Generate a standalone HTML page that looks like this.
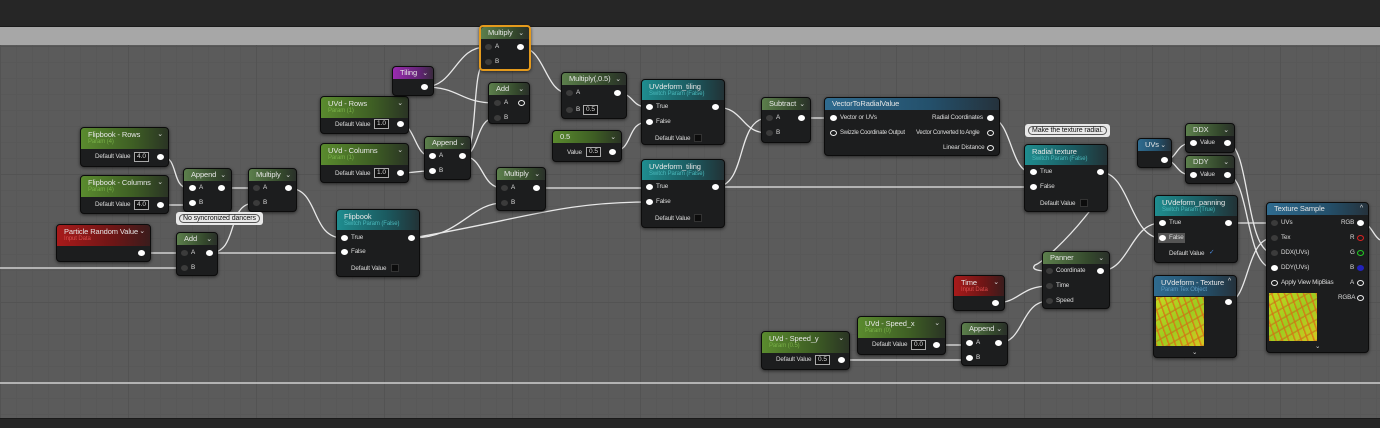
<!DOCTYPE html>
<html><head><meta charset="utf-8"><style>
*{margin:0;padding:0;box-sizing:border-box}
body{width:1380px;height:428px;overflow:hidden;position:relative;font-family:"Liberation Sans",sans-serif;background:#5b5b5b;
background-image:linear-gradient(#535353 1px,transparent 1px),linear-gradient(90deg,#535353 1px,transparent 1px),linear-gradient(#585858 1px,transparent 1px),linear-gradient(90deg,#585858 1px,transparent 1px);
background-size:128px 128px,128px 128px,16px 16px,16px 16px;background-position:0 46px}
.top{position:absolute;left:0;top:0;width:1380px;height:27px;background:#262626;border-bottom:1px solid #1a1a1a}
.band{position:absolute;left:0;top:27px;width:1380px;height:18px;background:#a7a7a7}
.bot{position:absolute;left:0;top:418px;width:1380px;height:10px;background:#262626;border-top:1px solid #1a1a1a}
svg{position:absolute;left:0;top:0}
.n{position:absolute;background:#1c1d1e;border:1px solid #0c0c0c;border-radius:4px;box-shadow:0 1px 3px rgba(0,0,0,.6)}
.h{position:absolute;left:0;top:0;right:0;border-radius:3px 3px 0 0;color:#e6e6e6;font-size:7.5px;padding:2px 0 0 7px;white-space:nowrap;letter-spacing:-0.1px}
.g{background:linear-gradient(90deg,#5a8b2e,#3e5e24 60%,#2a3424)}
.gs{background:linear-gradient(90deg,#5c7f4c,#34482c 70%,#2a302a)}
.c{background:linear-gradient(90deg,#1f8d8f,#1b5a60 60%,#223236)}
.b{background:linear-gradient(90deg,#2f6b8f,#24506b 60%,#25323c)}
.r{background:linear-gradient(90deg,#a81a1a,#6e1616 60%,#3a1c1c)}
.pu{background:linear-gradient(90deg,#9a2bb0,#5e2470 70%,#3a2a3e)}
.h i{display:block;font-style:normal;font-size:6px;color:#79b048;margin-top:0px}
.c i{color:#4ab8bb}.b i{color:#5d9ac0}.r i{color:#d84a4a}
.h s{position:absolute;right:5px;top:2px;text-decoration:none;font-size:7px;color:#ddd}
.t{position:absolute;font-size:6.3px;color:#ddd;white-space:nowrap;line-height:8px;letter-spacing:-0.15px}
.v{position:absolute;font-size:6.5px;color:#ddd;border:1px solid #aaa;padding:0 2px;line-height:8px;background:#111}
.p{position:absolute;width:7px;height:6px;border-radius:50%;background:#fff;margin:-3px 0 0 -3px}
.d{position:absolute;width:7px;height:6px;border-radius:50%;background:#3b3b3b;margin:-3px 0 0 -3px}
.o{position:absolute;width:7px;height:6px;border-radius:50%;border:1.5px solid #eee;margin:-3px 0 0 -3px}
.k{position:absolute;width:8px;height:8px;background:#0c0c0c;border:1px solid #333}
.cm{position:absolute;background:#e8e8e8;border-radius:3px;font-size:7px;color:#111;padding:1px 3px;white-space:nowrap;line-height:11px;letter-spacing:-0.1px}
.cm span{border:1px solid #555;border-radius:6px;padding:0 3px}
.tex{position:absolute;background:repeating-linear-gradient(70deg,rgba(220,110,20,.8) 0 1px,transparent 2px 6px),repeating-linear-gradient(-30deg,rgba(200,90,20,.5) 0 1px,transparent 2px 9px),linear-gradient(135deg,#c6d820,#9ccc20 50%,#d6c820)}
</style></head><body>
<div class="top"></div><div class="band"></div>
<svg width="1380" height="428" fill="none" stroke="#e8e8e8" stroke-width="1.3">
<path d="M0 383H1380"/>
<path d="M0 268H183"/>
<path d="M163 157C178 157 172 188 188 188"/>
<path d="M163 205H188"/>
<path d="M226 188H255"/>
<path d="M209 253C240 253 225 203 255 203"/>
<path d="M288 188C320 188 310 238 343 238"/>
<path d="M142 253H183"/>
<path d="M209 253H343"/>
<path d="M400 124C415 124 415 156 430 156"/>
<path d="M400 173C415 173 415 171 430 171"/>
<path d="M424 87C455 87 455 47 486 47"/>
<path d="M424 87C460 87 460 103 495 103"/>
<path d="M462 156C480 156 470 62 486 62"/>
<path d="M462 156C480 156 475 118 495 118"/>
<path d="M462 156C485 156 480 188 503 188"/>
<path d="M412 238C460 238 470 203 503 203"/>
<path d="M412 238C520 220 560 202 648 202"/>
<path d="M520 47C545 47 545 93 568 93"/>
<path d="M617 93C635 93 630 107 648 107"/>
<path d="M611 152C635 152 625 122 648 122"/>
<path d="M536 188H648"/>
<path d="M715 107C745 107 740 133 768 133"/>
<path d="M715 187C748 187 735 118 768 118"/>
<path d="M715 187H1031"/>
<path d="M801 118H831"/>
<path d="M990 118C1012 118 1010 172 1031 172"/>
<path d="M1100 172C1130 172 1130 238 1161 238"/>
<path d="M1100 172C1130 175 1050 260 1035 265C1030 270 1040 271 1049 271"/>
<path d="M1100 271C1130 271 1130 223 1161 223"/>
<path d="M995 303C1020 303 1020 286 1049 286"/>
<path d="M998 343C1025 343 1020 301 1049 301"/>
<path d="M936 345H968"/>
<path d="M840 360H968"/>
<path d="M1164 160C1178 160 1175 143 1192 143"/>
<path d="M1164 160C1178 160 1175 175 1192 175"/>
<path d="M1228 223H1273"/>
<path d="M1227 302C1250 302 1245 238 1273 238"/>
<path d="M1227 143C1250 143 1245 253 1273 253"/>
<path d="M1227 175C1250 175 1245 268 1273 268"/>
<path d="M1360 223C1372 223 1372 235 1380 240"/>
</svg>

<div class="n" style="left:80px;top:127px;width:89px;height:40px"><div class="h g" style="height:21px">Flipbook - Rows<i>Param (4)</i><s>⌄</s></div></div>
<div class="t" style="left:95px;top:153px">Default Value</div><div class="v" style="left:134px;top:152px">4.0</div><div class="p" style="left:160px;top:157px"></div>
<div class="n" style="left:80px;top:175px;width:89px;height:39px"><div class="h g" style="height:21px">Flipbook - Columns<i>Param (4)</i><s>⌄</s></div></div>
<div class="t" style="left:95px;top:201px">Default Value</div><div class="v" style="left:134px;top:200px">4.0</div><div class="p" style="left:160px;top:205px"></div>
<div class="n" style="left:56px;top:224px;width:95px;height:38px"><div class="h r" style="height:21px">Particle Random Value<i>Input Data</i><s>⌄</s></div></div>
<div class="p" style="left:141px;top:253px"></div>
<div class="n" style="left:183px;top:168px;width:49px;height:44px"><div class="h gs" style="height:12px;padding-top:1px;padding-left:7px">Append<s>⌄</s></div></div>
<div class="p" style="left:192px;top:188px"></div><div class="t" style="left:199px;top:184px">A</div><div class="p" style="left:221px;top:188px"></div>
<div class="p" style="left:192px;top:203px"></div><div class="t" style="left:199px;top:199px">B</div>
<div class="n" style="left:248px;top:168px;width:49px;height:44px"><div class="h gs" style="height:12px;padding-top:1px">Multiply<s>⌄</s></div></div>
<div class="d" style="left:256px;top:188px"></div><div class="t" style="left:263px;top:184px">A</div><div class="p" style="left:288px;top:188px"></div>
<div class="d" style="left:256px;top:203px"></div><div class="t" style="left:263px;top:199px">B</div>
<div class="cm" style="left:176px;top:212px"><span>No syncronized dancers</span></div>
<div class="n" style="left:176px;top:232px;width:42px;height:44px"><div class="h gs" style="height:12px;padding-top:1px">Add<s>⌄</s></div></div>
<div class="d" style="left:184px;top:253px"></div><div class="t" style="left:191px;top:249px">A</div><div class="p" style="left:209px;top:253px"></div>
<div class="d" style="left:184px;top:268px"></div><div class="t" style="left:191px;top:264px">B</div>
<div class="n" style="left:320px;top:96px;width:89px;height:38px"><div class="h g" style="height:21px">UVd - Rows<i>Param (1)</i><s>⌄</s></div></div>
<div class="t" style="left:335px;top:121px">Default Value</div><div class="v" style="left:374px;top:119px">1.0</div><div class="p" style="left:400px;top:124px"></div>
<div class="n" style="left:320px;top:143px;width:89px;height:40px"><div class="h g" style="height:21px">UVd - Columns<i>Param (1)</i><s>⌄</s></div></div>
<div class="t" style="left:335px;top:170px">Default Value</div><div class="v" style="left:374px;top:168px">1.0</div><div class="p" style="left:400px;top:173px"></div>
<div class="n" style="left:392px;top:66px;width:42px;height:30px"><div class="h pu" style="height:12px;padding-top:1px">Tiling<s>⌄</s></div></div>
<div class="p" style="left:424px;top:87px"></div>
<div class="n" style="left:424px;top:136px;width:47px;height:44px"><div class="h gs" style="height:12px;padding-top:1px">Append<s>⌄</s></div></div>
<div class="p" style="left:432px;top:156px"></div><div class="t" style="left:439px;top:152px">A</div><div class="p" style="left:462px;top:156px"></div>
<div class="p" style="left:432px;top:171px"></div><div class="t" style="left:439px;top:167px">B</div>
<div class="n" style="left:336px;top:209px;width:84px;height:68px"><div class="h c" style="height:20px">Flipbook<i>Switch Param (False)</i></div></div>
<div class="p" style="left:344px;top:238px"></div><div class="t" style="left:351px;top:234px">True</div><div class="p" style="left:411px;top:238px"></div>
<div class="p" style="left:344px;top:252px"></div><div class="t" style="left:351px;top:248px">False</div>
<div class="t" style="left:351px;top:265px">Default Value</div><div class="k" style="left:391px;top:264px"></div>
<div class="n" style="left:479px;top:25px;width:52px;height:46px;border:2px solid #e49a1c"><div class="h gs" style="height:12px;padding-top:1px">Multiply<s>⌄</s></div></div>
<div class="d" style="left:488px;top:47px"></div><div class="t" style="left:495px;top:43px">A</div><div class="p" style="left:520px;top:47px"></div>
<div class="d" style="left:488px;top:62px"></div><div class="t" style="left:495px;top:58px">B</div>
<div class="n" style="left:488px;top:82px;width:42px;height:42px"><div class="h gs" style="height:12px;padding-top:1px">Add<s>⌄</s></div></div>
<div class="d" style="left:497px;top:103px"></div><div class="t" style="left:504px;top:99px">A</div><div class="o" style="left:521px;top:103px"></div>
<div class="d" style="left:497px;top:118px"></div><div class="t" style="left:504px;top:114px">B</div>
<div class="n" style="left:496px;top:167px;width:50px;height:44px"><div class="h gs" style="height:12px;padding-top:1px">Multiply<s>⌄</s></div></div>
<div class="d" style="left:504px;top:188px"></div><div class="t" style="left:511px;top:184px">A</div><div class="p" style="left:536px;top:188px"></div>
<div class="d" style="left:504px;top:203px"></div><div class="t" style="left:511px;top:199px">B</div>
<div class="n" style="left:561px;top:72px;width:66px;height:47px"><div class="h gs" style="height:12px;padding-top:1px">Multiply(,0.5)<s>⌄</s></div></div>
<div class="d" style="left:569px;top:93px"></div><div class="t" style="left:576px;top:89px">A</div><div class="p" style="left:617px;top:93px"></div>
<div class="d" style="left:569px;top:110px"></div><div class="t" style="left:576px;top:106px">B</div><div class="v" style="left:583px;top:105px">0.5</div>
<div class="n" style="left:552px;top:130px;width:70px;height:32px"><div class="h g" style="height:12px;padding-top:1px">0.5<s>⌄</s></div></div>
<div class="t" style="left:567px;top:149px">Value</div><div class="v" style="left:586px;top:147px">0.5</div><div class="p" style="left:612px;top:152px"></div>
<div class="n" style="left:641px;top:79px;width:84px;height:66px"><div class="h c" style="height:20px">UVdeform_tiling<i>Switch Param (False)</i></div></div>
<div class="p" style="left:649px;top:107px"></div><div class="t" style="left:656px;top:103px">True</div><div class="p" style="left:715px;top:107px"></div>
<div class="p" style="left:649px;top:122px"></div><div class="t" style="left:656px;top:118px">False</div>
<div class="t" style="left:655px;top:135px">Default Value</div><div class="k" style="left:694px;top:134px"></div>
<div class="n" style="left:641px;top:159px;width:84px;height:69px"><div class="h c" style="height:20px">UVdeform_tiling<i>Switch Param (False)</i></div></div>
<div class="p" style="left:649px;top:187px"></div><div class="t" style="left:656px;top:183px">True</div><div class="p" style="left:715px;top:187px"></div>
<div class="p" style="left:649px;top:202px"></div><div class="t" style="left:656px;top:198px">False</div>
<div class="t" style="left:655px;top:215px">Default Value</div><div class="k" style="left:694px;top:214px"></div>
<div class="n" style="left:761px;top:97px;width:50px;height:46px"><div class="h gs" style="height:12px;padding-top:1px">Subtract<s>⌄</s></div></div>
<div class="d" style="left:769px;top:118px"></div><div class="t" style="left:776px;top:114px">A</div><div class="p" style="left:801px;top:118px"></div>
<div class="d" style="left:769px;top:133px"></div><div class="t" style="left:776px;top:129px">B</div>
<div class="n" style="left:824px;top:97px;width:176px;height:59px"><div class="h b" style="height:12px;padding-top:1px">VectorToRadialValue</div></div>
<div class="p" style="left:833px;top:118px"></div><div class="t" style="left:840px;top:114px">Vector or UVs</div>
<div class="o" style="left:833px;top:133px"></div><div class="t" style="left:840px;top:129px;font-size:6px;letter-spacing:-0.25px">Swizzle Coordinate Output</div>
<div class="t" style="left:932px;top:114px">Radial Coordinates</div><div class="p" style="left:990px;top:118px"></div>
<div class="t" style="left:916px;top:129px;font-size:6px;letter-spacing:-0.25px">Vector Converted to Angle</div><div class="o" style="left:990px;top:133px"></div>
<div class="t" style="left:943px;top:144px">Linear Distance</div><div class="o" style="left:990px;top:148px"></div>
<div class="cm" style="left:1025px;top:124px"><span>Make the texture radial.</span></div>
<div class="n" style="left:1024px;top:144px;width:84px;height:68px"><div class="h c" style="height:20px">Radial texture<i>Switch Param (False)</i></div></div>
<div class="p" style="left:1033px;top:172px"></div><div class="t" style="left:1040px;top:168px">True</div><div class="p" style="left:1100px;top:172px"></div>
<div class="p" style="left:1033px;top:187px"></div><div class="t" style="left:1040px;top:183px">False</div>
<div class="t" style="left:1040px;top:200px">Default Value</div><div class="k" style="left:1080px;top:199px"></div>
<div class="n" style="left:1137px;top:138px;width:35px;height:30px"><div class="h b" style="height:12px;padding-top:1px">UVs<s>⌄</s></div></div>
<div class="p" style="left:1164px;top:160px"></div>
<div class="n" style="left:1185px;top:123px;width:50px;height:30px"><div class="h gs" style="height:12px;padding-top:1px">DDX<s>⌄</s></div></div>
<div class="p" style="left:1193px;top:143px"></div><div class="t" style="left:1200px;top:139px">Value</div><div class="p" style="left:1227px;top:143px"></div>
<div class="n" style="left:1185px;top:155px;width:50px;height:29px"><div class="h gs" style="height:12px;padding-top:1px">DDY<s>⌄</s></div></div>
<div class="p" style="left:1193px;top:175px"></div><div class="t" style="left:1200px;top:171px">Value</div><div class="p" style="left:1227px;top:175px"></div>
<div class="n" style="left:1154px;top:195px;width:84px;height:68px"><div class="h c" style="height:20px">UVdeform_panning<i>Switch Param (True)</i></div></div>
<div class="p" style="left:1162px;top:223px"></div><div class="t" style="left:1169px;top:219px">True</div><div class="p" style="left:1228px;top:223px"></div>
<div style="position:absolute;left:1158px;top:233px;width:27px;height:10px;background:#555"></div>
<div class="p" style="left:1162px;top:238px"></div><div class="t" style="left:1169px;top:234px">False</div>
<div class="t" style="left:1169px;top:250px">Default Value</div><div class="t" style="left:1209px;top:249px;color:#4a8ae0">✓</div>
<div class="n" style="left:1153px;top:275px;width:84px;height:83px"><div class="h b" style="height:20px">UVdeform - Texture<i>Param Tex Object</i><s>^</s></div></div>
<div class="tex" style="left:1156px;top:297px;width:48px;height:49px"></div><div class="p" style="left:1228px;top:302px"></div>
<div class="t" style="left:1192px;top:349px">⌄</div>
<div class="n" style="left:1266px;top:202px;width:103px;height:151px"><div class="h b" style="height:12px;padding-top:1px">Texture Sample<s>^</s></div></div>
<div class="d" style="left:1274px;top:223px"></div><div class="t" style="left:1281px;top:219px">UVs</div><div class="t" style="left:1341px;top:219px">RGB</div><div class="p" style="left:1360px;top:223px"></div>
<div class="d" style="left:1274px;top:238px"></div><div class="t" style="left:1281px;top:234px">Tex</div><div class="t" style="left:1350px;top:234px">R</div><div class="o" style="left:1360px;top:238px;border-color:#d22"></div>
<div class="d" style="left:1274px;top:253px"></div><div class="t" style="left:1281px;top:249px">DDX(UVs)</div><div class="t" style="left:1350px;top:249px">G</div><div class="o" style="left:1360px;top:253px;border-color:#2c2"></div>
<div class="p" style="left:1274px;top:268px"></div><div class="t" style="left:1281px;top:264px">DDY(UVs)</div><div class="t" style="left:1350px;top:264px">B</div><div class="p" style="left:1360px;top:268px;background:#22b"></div>
<div class="o" style="left:1274px;top:283px"></div><div class="t" style="left:1281px;top:279px">Apply View MipBias</div><div class="t" style="left:1350px;top:279px">A</div><div class="o" style="left:1360px;top:283px"></div>
<div class="t" style="left:1338px;top:294px">RGBA</div><div class="o" style="left:1360px;top:298px"></div>
<div class="tex" style="left:1269px;top:293px;width:48px;height:48px"></div>
<div class="t" style="left:1315px;top:343px">⌄</div>
<div class="n" style="left:1042px;top:251px;width:68px;height:58px"><div class="h gs" style="height:12px;padding-top:1px">Panner<s>⌄</s></div></div>
<div class="d" style="left:1049px;top:271px"></div><div class="t" style="left:1056px;top:267px">Coordinate</div><div class="p" style="left:1100px;top:271px"></div>
<div class="d" style="left:1049px;top:286px"></div><div class="t" style="left:1056px;top:282px">Time</div>
<div class="d" style="left:1049px;top:301px"></div><div class="t" style="left:1056px;top:297px">Speed</div>
<div class="n" style="left:953px;top:275px;width:52px;height:36px"><div class="h r" style="height:20px">Time<i>Input Data</i><s>⌄</s></div></div>
<div class="p" style="left:995px;top:303px"></div>
<div class="n" style="left:857px;top:316px;width:89px;height:39px"><div class="h g" style="height:21px">UVd - Speed_x<i>Param (0)</i><s>⌄</s></div></div>
<div class="t" style="left:872px;top:341px">Default Value</div><div class="v" style="left:911px;top:340px">0.0</div><div class="p" style="left:936px;top:345px"></div>
<div class="n" style="left:761px;top:331px;width:89px;height:39px"><div class="h g" style="height:21px">UVd - Speed_y<i>Param (0.5)</i><s>⌄</s></div></div>
<div class="t" style="left:776px;top:356px">Default Value</div><div class="v" style="left:815px;top:355px">0.5</div><div class="p" style="left:841px;top:360px"></div>
<div class="n" style="left:961px;top:322px;width:47px;height:44px"><div class="h gs" style="height:12px;padding-top:1px">Append<s>⌄</s></div></div>
<div class="p" style="left:969px;top:343px"></div><div class="t" style="left:976px;top:339px">A</div><div class="p" style="left:998px;top:343px"></div>
<div class="p" style="left:969px;top:358px"></div><div class="t" style="left:976px;top:354px">B</div>
<div class="bot"></div>
</body></html>
